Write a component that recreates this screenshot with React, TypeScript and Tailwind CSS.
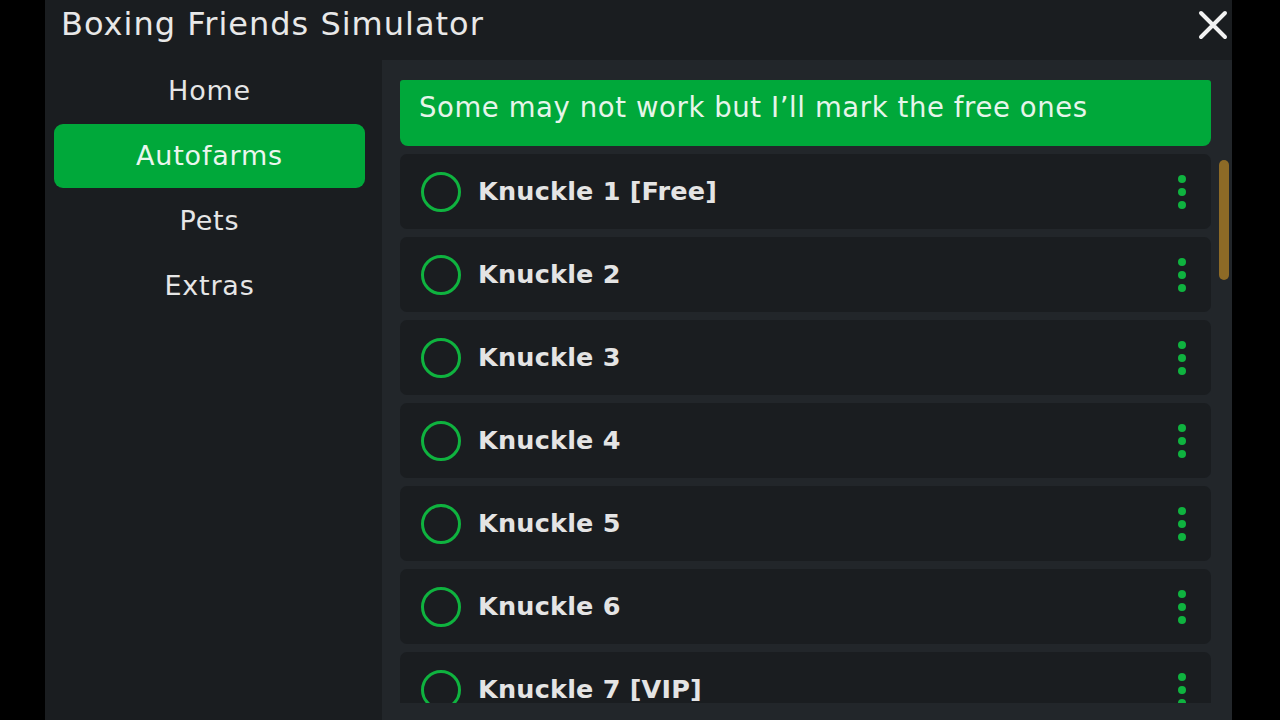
const items = [
  'Knuckle 1 [Free]',
  'Knuckle 2',
  'Knuckle 3',
  'Knuckle 4',
  'Knuckle 5',
  'Knuckle 6',
  'Knuckle 7 [VIP]',
];

const tabs = ['Home', 'Autofarms', 'Pets', 'Extras'];

function Dots() {
  return (
    <div className="flex flex-col gap-[5px]">
      <span className="w-2 h-2 rounded-full bg-[#0fb33f]" />
      <span className="w-2 h-2 rounded-full bg-[#0fb33f]" />
      <span className="w-2 h-2 rounded-full bg-[#0fb33f]" />
    </div>
  );
}

function CloseIcon() {
  return (
    <svg width="30" height="30" viewBox="0 0 30 30" className="mt-[10px] mr-[4px]">
      <path d="M3 3 L27 27 M27 3 L3 27" stroke="#f2f2f2" strokeWidth="4" strokeLinecap="round" />
    </svg>
  );
}

export default function App() {
  return (
    <div
      className="w-[1280px] h-[720px] bg-black flex overflow-hidden"
      style={{ fontFamily: '"DejaVu Sans", Lato, sans-serif' }}
    >
      <div className="ml-[45px] w-[1187px] h-full bg-[#1a1d20] flex flex-col">
        {/* title bar */}
        <div className="h-[60px] flex items-start justify-between pl-4">
          <h1 className="text-[32px] leading-none mt-[8px] text-[#e8e8e8] font-normal tracking-[1px]">
            Boxing Friends Simulator
          </h1>
          <CloseIcon />
        </div>

        <div className="flex flex-1 min-h-0">
          {/* sidebar */}
          <nav className="w-[337px] pl-[9px] pr-[17px] -mt-px flex flex-col gap-[1px]">
            {tabs.map((t) => (
              <div
                key={t}
                className={
                  t === 'Autofarms'
                    ? 'h-[64px] rounded-[9px] bg-[#00a83a] flex items-center justify-center text-[27px] tracking-[0.8px] text-[#eaf6ee]'
                    : 'h-[64px] flex items-center justify-center text-[27px] tracking-[0.8px] text-[#e6e6e6]'
                }
              >
                {t}
              </div>
            ))}
          </nav>

          {/* content */}
          <div className="flex-1 bg-[#22262a] pl-[18px] pr-[3px] pt-5 pb-[17px] flex min-h-0">
            <div className="flex-1 flex flex-col gap-2 overflow-hidden">
              <div className="shrink-0 h-[66px] rounded-b-[8px] rounded-t-[3px] bg-[#00a83a] flex items-start pt-[10px] pl-[19px] text-[27.5px] tracking-[0.6px] leading-[34px] text-[#e6f5ea]">
                Some may not work but I’ll mark the free ones
              </div>
              {items.map((name) => (
                <div
                  key={name}
                  className="shrink-0 h-[75px] rounded-[7px] bg-[#1a1d20] flex items-center pl-[21px] pr-[25px]"
                >
                  <span className="w-[40px] h-[40px] rounded-full border-[3px] border-[#0fb33f]" />
                  <span className="ml-[17px] flex-1 text-[25.5px] tracking-[0.2px] font-bold text-[#e4e4e4]">{name}</span>
                  <Dots />
                </div>
              ))}
            </div>
            <div className="w-[18px] flex justify-end pt-[80px]">
              <div className="w-[10px] h-[120px] rounded-full bg-[#8d6a26]" />
            </div>
          </div>
        </div>
      </div>
    </div>
  );
}
